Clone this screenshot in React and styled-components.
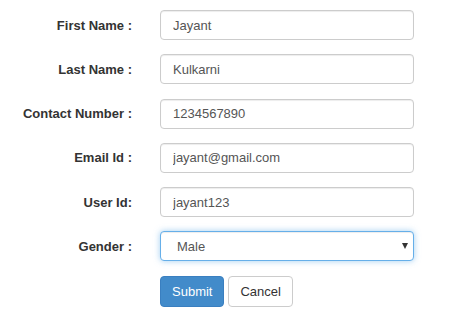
import React from 'react'
import styled, { createGlobalStyle } from 'styled-components'

const GlobalStyle = createGlobalStyle`
  html, body {
    margin: 0;
    padding: 0;
    background: #fff;
    font-family: "Liberation Sans", Arial, Helvetica, sans-serif;
  }
`

const Form = styled.form`
  display: grid;
  grid-template-columns: 132px 254px;
  column-gap: 28px;
  row-gap: 14.3px;
  padding-top: 10px;
  align-items: center;
`

const Label = styled.label`
  text-align: right;
  font-size: 13px;
  line-height: 15px;
  font-weight: bold;
  color: #333;
  white-space: nowrap;
`

const Input = styled.input`
  box-sizing: border-box;
  display: block;
  width: 100%;
  height: 30px;
  margin: 0;
  padding: 0 12px;
  font-family: inherit;
  font-size: 13px;
  color: #555;
  background: #fff;
  border: 1px solid #ccc;
  border-radius: 4px;
  box-shadow: inset 0 1px 1px rgba(0, 0, 0, 0.075);
  outline: none;
`

const SelectWrap = styled.div`
  position: relative;
`

const Select = styled.select`
  box-sizing: border-box;
  display: block;
  width: 100%;
  height: 30px;
  margin: 0;
  padding: 0 16px;
  font-family: inherit;
  font-size: 13px;
  color: #555;
  background: #fff;
  border: 1px solid #66afe9;
  border-radius: 4px;
  box-shadow: inset 0 1px 1px rgba(0, 0, 0, 0.075), 0 0 6px rgba(102, 175, 233, 0.6);
  outline: none;
  appearance: none;
  -webkit-appearance: none;
`

const Caret = styled.span`
  position: absolute;
  right: 6px;
  top: 12px;
  width: 0;
  height: 0;
  border-left: 3px solid transparent;
  border-right: 3px solid transparent;
  border-top: 6px solid #333;
  pointer-events: none;
`

const Actions = styled.div`
  grid-column: 2;
  display: flex;
  gap: 4px;
`

const Button = styled.button`
  box-sizing: border-box;
  height: 31px;
  margin: 0;
  padding: 0 11px;
  font-family: inherit;
  font-size: 13px;
  border-radius: 4px;
  cursor: pointer;
  color: ${p => (p.$primary ? '#fff' : '#333')};
  background: ${p => (p.$primary ? '#428bca' : '#fff')};
  border: 1px solid ${p => (p.$primary ? '#3a7fc0' : '#ccc')};
`

const fields = [
  ['First Name :', 'Jayant'],
  ['Last Name :', 'Kulkarni'],
  ['Contact Number :', '1234567890'],
  ['Email Id :', 'jayant@gmail.com'],
  ['User Id:', 'jayant123'],
]

export default function App() {
  return (
    <>
      <GlobalStyle />
      <Form onSubmit={e => e.preventDefault()}>
        {fields.map(([label, value]) => (
          <React.Fragment key={label}>
            <Label>{label}</Label>
            <Input defaultValue={value} />
          </React.Fragment>
        ))}
        <Label>Gender :</Label>
        <SelectWrap>
          <Select defaultValue="Male">
            <option>Male</option>
            <option>Female</option>
          </Select>
          <Caret />
        </SelectWrap>
        <Actions>
          <Button type="submit" $primary>Submit</Button>
          <Button type="button">Cancel</Button>
        </Actions>
      </Form>
    </>
  )
}
